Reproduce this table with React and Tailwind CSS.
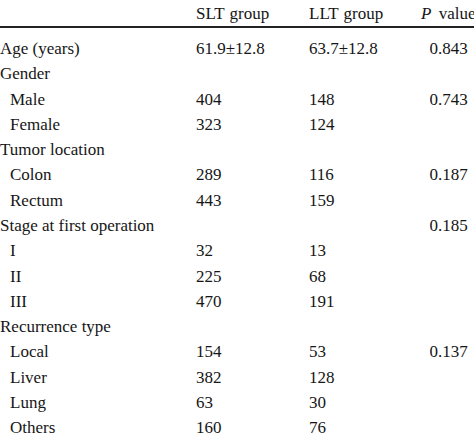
import React from 'react';

const rows = [
  { label: 'Age (years)', slt: '61.9±12.8', llt: '63.7±12.8', p: '0.843' },
  { label: 'Gender' },
  { label: 'Male', sub: true, slt: '404', llt: '148', p: '0.743' },
  { label: 'Female', sub: true, slt: '323', llt: '124' },
  { label: 'Tumor location' },
  { label: 'Colon', sub: true, slt: '289', llt: '116', p: '0.187' },
  { label: 'Rectum', sub: true, slt: '443', llt: '159' },
  { label: 'Stage at first operation', p: '0.185' },
  { label: 'I', sub: true, slt: '32', llt: '13' },
  { label: 'II', sub: true, slt: '225', llt: '68' },
  { label: 'III', sub: true, slt: '470', llt: '191' },
  { label: 'Recurrence type' },
  { label: 'Local', sub: true, slt: '154', llt: '53', p: '0.137' },
  { label: 'Liver', sub: true, slt: '382', llt: '128' },
  { label: 'Lung', sub: true, slt: '63', llt: '30' },
  { label: 'Others', sub: true, slt: '160', llt: '76' },
];

export default function App() {
  return (
    <div
      className="w-[474px] h-[436px] overflow-hidden bg-white text-[#161616] text-[17px]"
      style={{ fontFamily: '"Liberation Serif", "Times New Roman", serif' }}
    >
      <div className="grid grid-cols-[196px_113px_112px_53px] h-[26px] items-center leading-none">
        <div />
        <div className="[word-spacing:1px]">SLT group</div>
        <div className="[word-spacing:1px]">LLT group</div>
        <div className="whitespace-nowrap [word-spacing:3px]"><span className="italic">P</span> value</div>
      </div>
      <div className="h-[2px] bg-[#222]" />
      <div className="pt-[8px]">
        {rows.map((r) => (
          <div key={r.label} className="grid grid-cols-[196px_113px_113px_53px] h-[25.27px] items-center leading-none">
            <div className={r.sub ? 'pl-[10px] whitespace-nowrap' : 'whitespace-nowrap'}>{r.label}</div>
            <div>{r.slt}</div>
            <div>{r.llt}</div>
            <div className="text-center">{r.p}</div>
          </div>
        ))}
      </div>
    </div>
  );
}
